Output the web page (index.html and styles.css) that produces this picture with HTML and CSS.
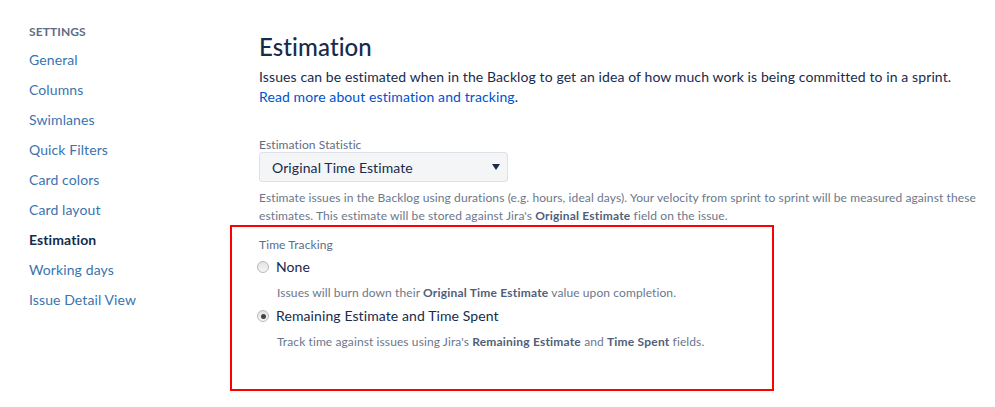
FILE: index.html
```html
<!DOCTYPE html>
<html>
<head>
<meta charset="utf-8">
<link rel="stylesheet" href="styles.css">
</head>
<body>
<div class="page">
  <nav class="sidebar">
    <div class="side-title">SETTINGS</div>
    <a class="side-link">General</a>
    <a class="side-link">Columns</a>
    <a class="side-link">Swimlanes</a>
    <a class="side-link">Quick Filters</a>
    <a class="side-link">Card colors</a>
    <a class="side-link">Card layout</a>
    <a class="side-link active">Estimation</a>
    <a class="side-link">Working days</a>
    <a class="side-link">Issue Detail View</a>
  </nav>
  <main class="main">
    <h1 class="title">Estimation</h1>
    <p class="intro">Issues can be estimated when in the Backlog to get an idea of how much work is being committed to in a sprint.<br><a class="link">Read more about estimation and tracking</a>.</p>
    <div class="field-label">Estimation Statistic</div>
    <div class="select">
      <span>Original Time Estimate</span>
      <svg class="arrow" width="8" height="6" viewBox="0 0 8 6"><path d="M0 0H8L4 6Z" fill="#172b4d"/></svg>
    </div>
    <p class="help">Estimate issues in the Backlog using durations (e.g. hours, ideal days). Your velocity from sprint to sprint will be measured against these estimates. This estimate will be stored against Jira's <b>Original Estimate</b> field on the issue.</p>
    <section class="tracking">
      <div class="field-label">Time Tracking</div>
      <label class="radio-row first"><span class="radio"></span><span>None</span></label>
      <p class="radio-help">Issues will burn down their <b>Original Time Estimate</b> value upon completion.</p>
      <label class="radio-row second"><span class="radio checked"></span><span>Remaining Estimate and Time Spent</span></label>
      <p class="radio-help">Track time against issues using Jira's <b>Remaining Estimate</b> and <b>Time Spent</b> fields.</p>
    </section>
  </main>
</div>
</body>
</html>
```
FILE: styles.css
```css
* { box-sizing: border-box; }
body {
  margin: 0;
  background: #fff;
  font-family: Lato, "Liberation Sans", sans-serif;
  color: #172b4d;
  letter-spacing: 0.1px;
}
.page {
  display: flex;
  width: 995px;
  height: 407px;
  overflow: hidden;
}
.sidebar {
  width: 259px;
  padding: 25px 0 0 29px;
  display: flex;
  flex-direction: column;
}
.side-title {
  font-size: 12px;
  font-weight: bold;
  color: #5e6c84;
  line-height: 14px;
  margin-bottom: 6px;
}
.side-link {
  font-size: 14px;
  line-height: 20px;
  padding: 5px 0;
  color: #3b73af;
}
.side-link.active {
  color: #172b4d;
  font-weight: bold;
}
.main {
  flex: 1;
  padding-top: 32px;
}
.title {
  margin: 0 0 5px;
  font-size: 24px;
  line-height: 30px;
  font-weight: 500;
  color: #172b4d;
}
.intro {
  margin: 0 0 31px;
  font-size: 14px;
  line-height: 20px;
}
.link { color: #0052cc; }
.field-label {
  font-size: 12px;
  line-height: 14px;
  color: #5e6c84;
}
.select {
  width: 249px;
  height: 30px;
  display: flex;
  align-items: center;
  justify-content: space-between;
  padding: 0 7px 0 12px;
  background: #f4f5f7;
  border: 1px solid #dfe1e6;
  border-radius: 3px;
  font-size: 14px;
  color: #172b4d;
}
.help {
  margin: 7px 0 0;
  font-size: 12px;
  line-height: 18px;
  color: #6b778c;
}
.help b, .radio-help b { color: #505f79; letter-spacing: 0.2px; }
.tracking {
  width: 544px;
  height: 166px;
  margin-left: -29px;
  border: 2px solid #ff0000;
  padding: 11px 0 0 27px;
}
.radio-row {
  display: flex;
  align-items: center;
  gap: 7px;
  font-size: 14px;
  line-height: 20px;
  color: #172b4d;
  margin-left: -2px;
}
.radio-row.first { margin-top: 5px; }
.radio-row.second { margin-top: 4px; }
.radio {
  width: 12px;
  height: 12px;
  border-radius: 50%;
  border: 1px solid #b9b9b9;
  background: linear-gradient(#e3e3e3, #f6f6f6);
  display: flex;
  align-items: center;
  justify-content: center;
}
.radio.checked::after {
  content: "";
  width: 5px;
  height: 5px;
  border-radius: 50%;
  background: #444;
}
.radio-help {
  margin: 7px 0 0 18px;
  font-size: 12px;
  line-height: 18px;
  color: #6b778c;
}
```
